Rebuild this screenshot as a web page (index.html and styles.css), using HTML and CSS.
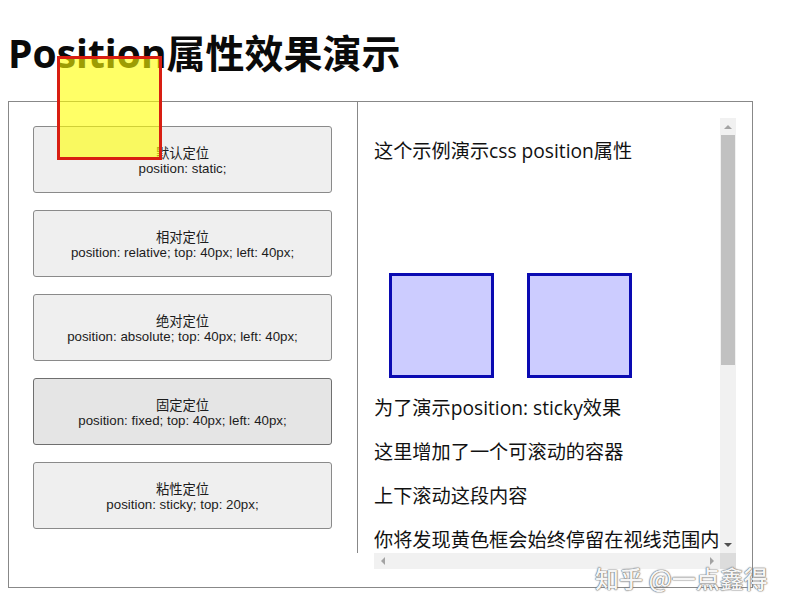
FILE: index.html
```html
<!DOCTYPE html>
<html lang="zh">
<head>
<meta charset="utf-8">
<title>Position属性效果演示</title>
<link rel="stylesheet" href="styles.css">
</head>
<body>
<h1 class="title">Position属性效果演示</h1>
<div class="demo">
  <div class="cards">
    <div class="card"><span>默认定位</span><span>position: static;</span></div>
    <div class="card"><span>相对定位</span><span>position: relative; top: 40px; left: 40px;</span></div>
    <div class="card"><span>绝对定位</span><span>position: absolute; top: 40px; left: 40px;</span></div>
    <div class="card card-hover"><span>固定定位</span><span>position: fixed; top: 40px; left: 40px;</span></div>
    <div class="card"><span>粘性定位</span><span>position: sticky; top: 20px;</span></div>
  </div>
  <div class="panel">
    <div class="scrollview">
      <div class="viewport">
        <p>这个示例演示css position属性</p>
        <div class="squares"><div class="square"></div><div class="square"></div></div>
        <p>为了演示position: sticky效果</p>
        <p>这里增加了一个可滚动的容器</p>
        <p>上下滚动这段内容</p>
        <p>你将发现黄色框会始终停留在视线范围内</p>
      </div>
      <div class="vbar">
        <div class="sb-btn"><span class="arrow arrow-up"></span></div>
        <div class="thumb"></div>
        <div class="track"></div>
        <div class="sb-btn"><span class="arrow arrow-down"></span></div>
      </div>
      <div class="hbar">
        <div class="sb-btn"><span class="arrow arrow-left"></span></div>
        <div class="track"></div>
        <div class="sb-btn"><span class="arrow arrow-right"></span></div>
      </div>
      <div class="corner"></div>
    </div>
  </div>
</div>
<div class="fixed-box"></div>
<div class="watermark">知乎 @一点鑫得</div>
</body>
</html>
```

FILE: styles.css
```css
html, body {
  margin: 0;
  padding: 0;
  background: #fff;
}

body {
  font-family: "Open Sans", "Noto Sans CJK SC", sans-serif;
  color: #111;
  width: 786px;
  height: 613px;
  overflow: hidden;
  position: relative;
}

.title {
  margin: 0;
  padding: 30px 0 0 8px;
  font: 700 39px/46px "Open Sans", "Noto Sans CJK SC", sans-serif;
  color: #0a0a0a;
}

.demo {
  margin: 25px 0 0 8px;
  width: 745px;
  height: 487px;
  box-sizing: border-box;
  border: 1px solid #888;
  display: grid;
  grid-template-columns: 348px 1fr;
  align-items: start;
}

.cards {
  padding: 24px 25px 0 24px;
  display: flex;
  flex-direction: column;
  gap: 17px;
}

.card {
  height: 67px;
  box-sizing: border-box;
  border: 1px solid #8a8a8a;
  border-radius: 3px;
  background: #efefef;
  display: flex;
  flex-direction: column;
  align-items: center;
  justify-content: center;
  font: 13.3px/15px "Liberation Sans", "Noto Sans CJK SC", sans-serif;
  color: #1c1c1c;
  padding-top: 2px;
}

.card-hover {
  background: #e5e5e5;
  border-color: #6f6f6f;
}

.panel {
  border-left: 1px solid #888;
  height: 451px;
  box-sizing: border-box;
  padding: 16px 15px 0 16px;
}

.scrollview {
  display: grid;
  grid-template-columns: 346px 16px;
  grid-template-rows: 435px 16px;
}

.viewport {
  overflow: hidden;
  padding-top: 1px;
  font-size: 19.2px;
  line-height: 24px;
  color: #111;
}

.viewport p {
  margin: 20px 0;
  white-space: nowrap;
}

.squares {
  display: flex;
  gap: 33px;
  margin: 110px 0 -2px 15px;
}

.square {
  width: 105px;
  height: 105px;
  box-sizing: border-box;
  border: 3px solid #0a0ab2;
  background: #ccccff;
}

.vbar {
  background: #f1f1f1;
  display: flex;
  flex-direction: column;
}

.hbar {
  background: #f1f1f1;
  display: flex;
}

.sb-btn {
  flex: 0 0 17px;
  display: flex;
  align-items: center;
  justify-content: center;
}

.thumb {
  height: 230px;
  margin: 0 1px;
  background: #c1c1c1;
}

.track {
  flex: 1;
}

.corner {
  background: #dcdcdc;
}

.arrow {
  width: 0;
  height: 0;
  border-style: solid;
}

.arrow-up {
  border-width: 0 4px 4px 4px;
  border-color: transparent transparent #a3a3a3 transparent;
}

.arrow-down {
  border-width: 4px 4px 0 4px;
  border-color: #505050 transparent transparent transparent;
}

.arrow-left {
  border-width: 4px 4px 4px 0;
  border-color: transparent #a3a3a3 transparent transparent;
}

.arrow-right {
  border-width: 4px 0 4px 4px;
  border-color: transparent transparent transparent #a3a3a3;
}

.fixed-box {
  position: absolute;
  left: 57px;
  top: 56px;
  width: 105px;
  height: 104px;
  box-sizing: border-box;
  border: 3px solid #d81e12;
  background: rgba(255, 255, 0, 0.6);
  z-index: 10;
}

.watermark {
  position: absolute;
  left: 595px;
  top: 563px;
  font: 500 24px/30px "Noto Sans CJK SC", sans-serif;
  color: rgba(255, 255, 255, 0.95);
  text-shadow: 0 0 1px #666, 0 0 1px #666, 0 0 2px #999;
  white-space: nowrap;
  z-index: 20;
}
```
